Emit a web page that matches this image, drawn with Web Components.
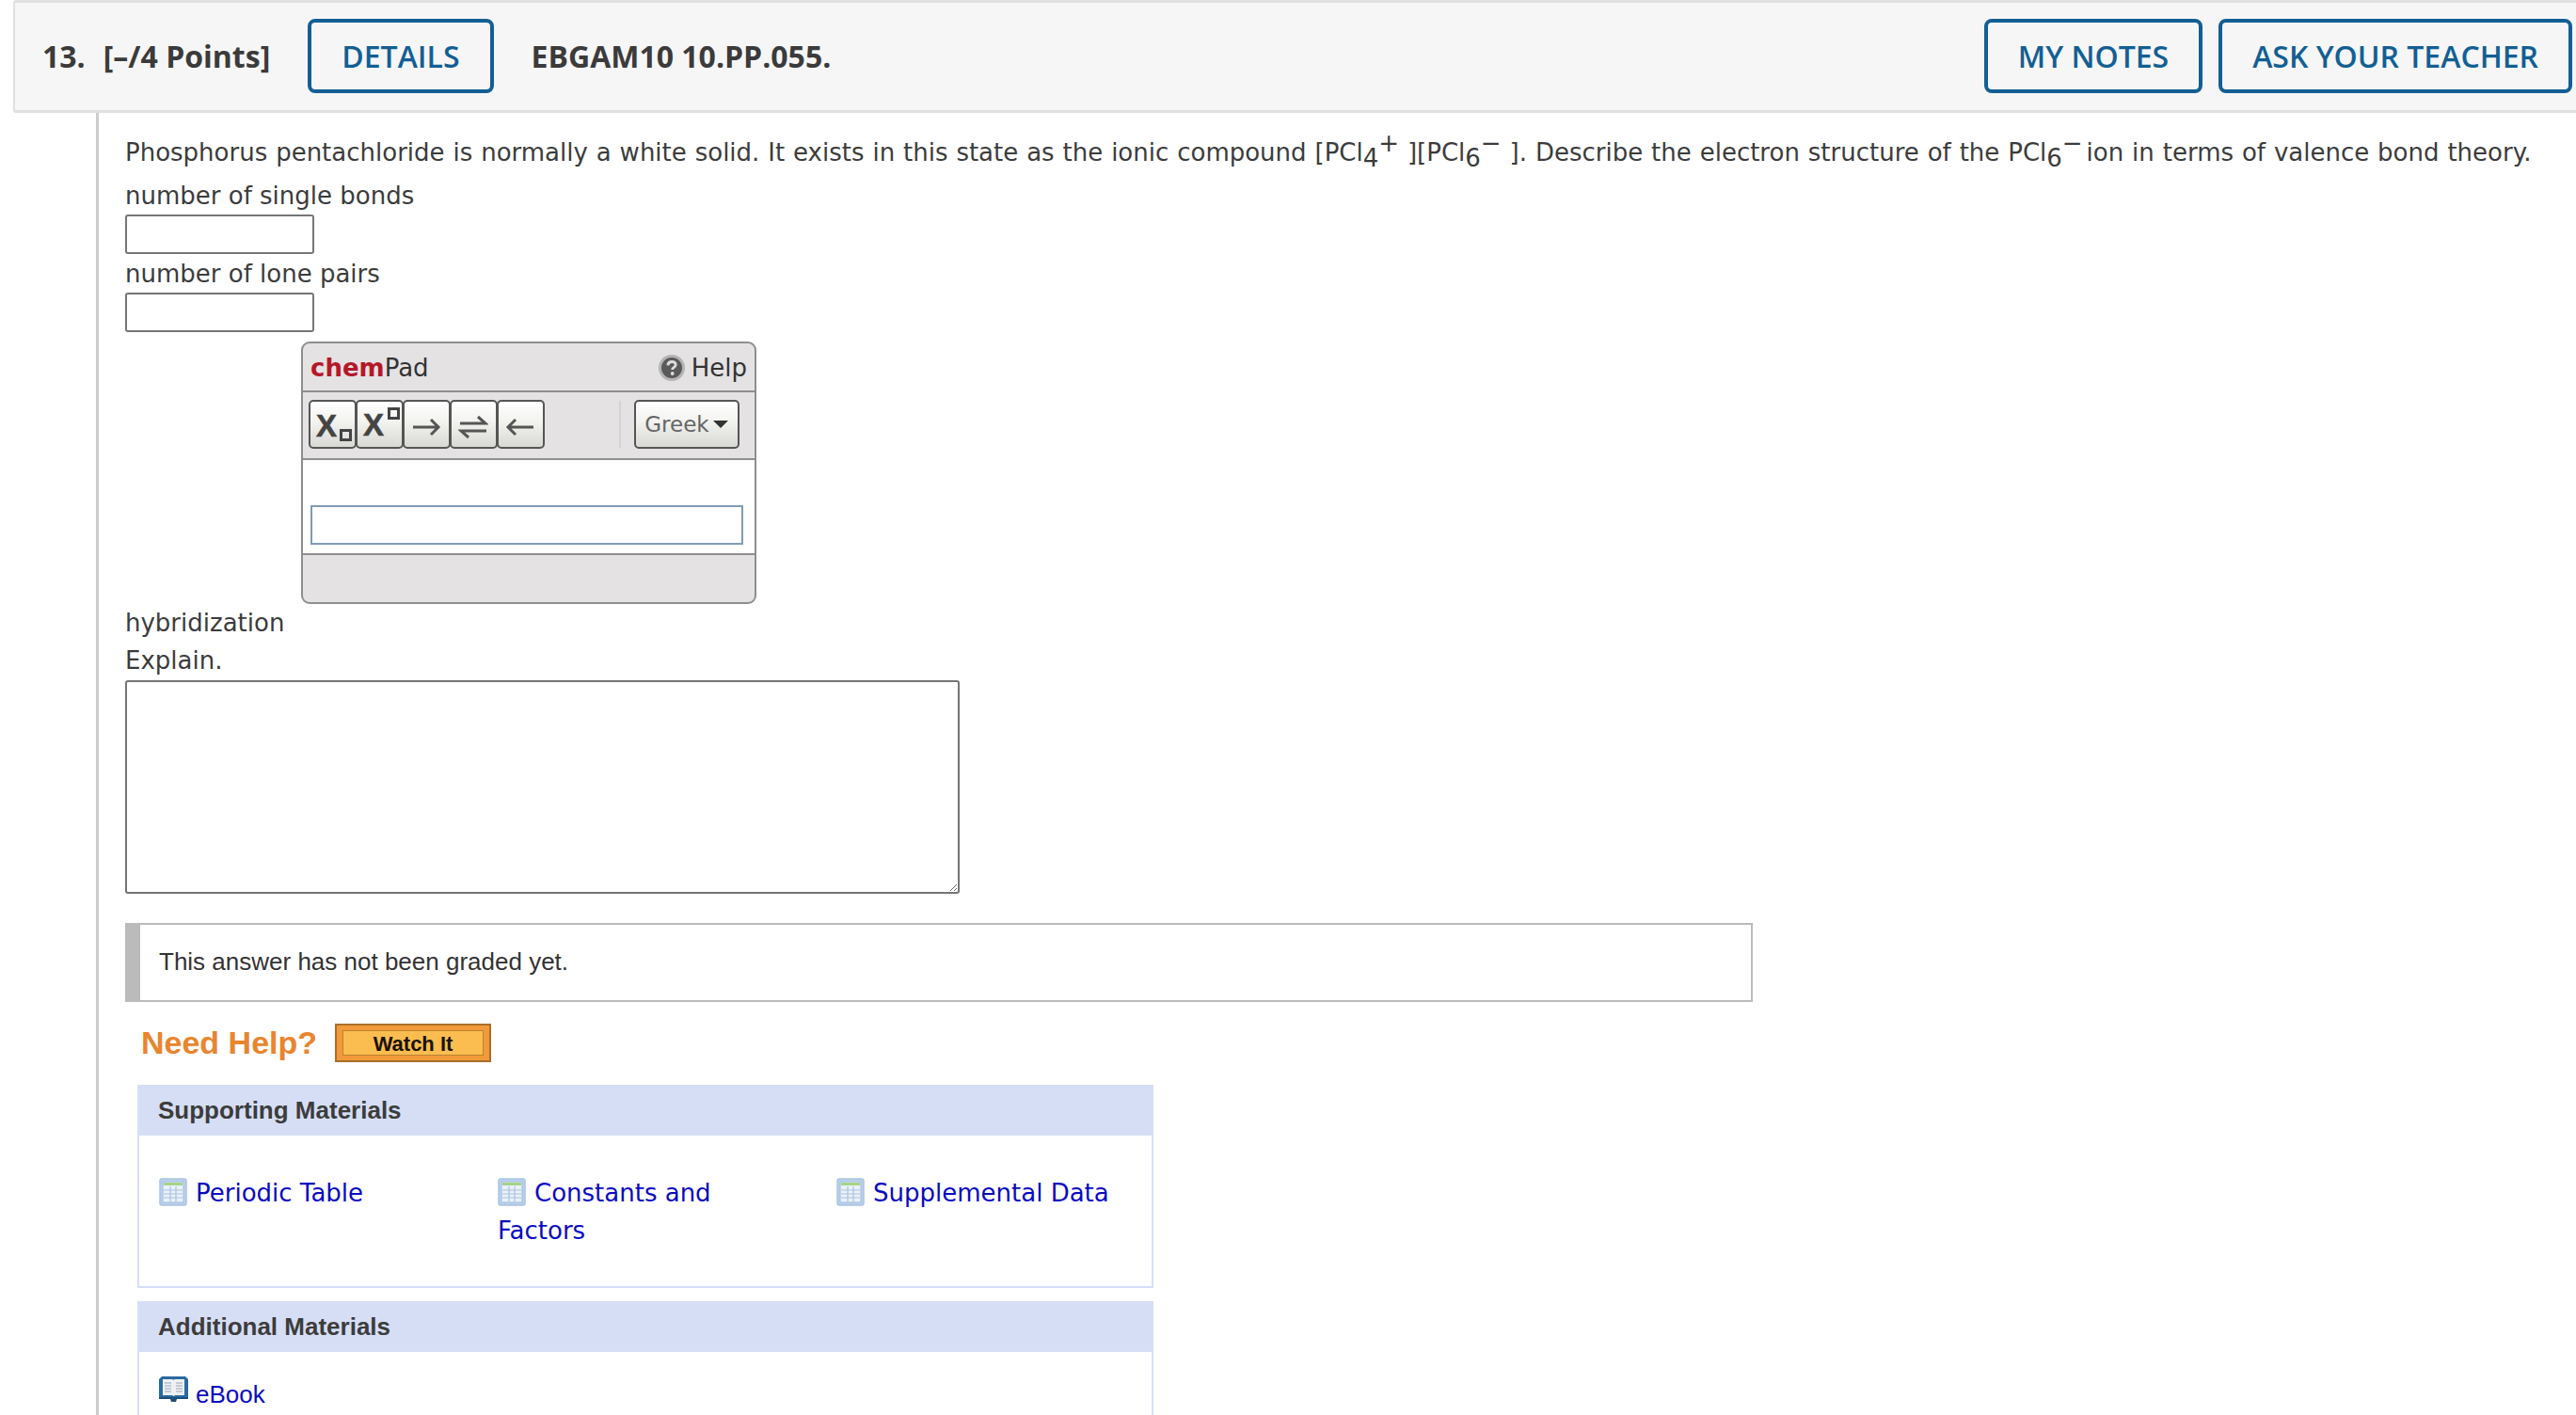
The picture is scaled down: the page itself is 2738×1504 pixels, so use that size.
<!DOCTYPE html>
<html lang="en"><head><meta charset="utf-8"><title>Question 13</title>
<style>
html,body{margin:0;padding:0;background:#fff;height:1504px;overflow:hidden}
body{font-family:"DejaVu Sans",Verdana,sans-serif;color:#3c3c3c}
</style></head><body>
<q-page>
  <q-header slot="header" number="13." points="[–/4 Points]" code="EBGAM10 10.PP.055."></q-header>
  <q-body>
    <q-text>Phosphorus pentachloride is normally a white solid. It exists in this state as the ionic compound [PCl<sub>4</sub><sup>+</sup> ][PCl<sub>6</sub><sup>−</sup> ]. Describe the electron structure of the PCl<sub>6</sub><sup style="letter-spacing:-5px">−</sup> ion in terms of valence bond theory.</q-text>
    <q-field label="number of single bonds"></q-field>
    <q-field label="number of lone pairs" style="margin-top:1px"></q-field>
    <chem-pad></chem-pad>
    <q-line>hybridization</q-line>
    <q-line>Explain.</q-line>
    <q-area></q-area>
    <grade-note>This answer has not been graded yet.</grade-note>
    <need-help></need-help>
    <mat-panel heading="Supporting Materials" variant="grid">
      <mat-link icon="table">Periodic Table</mat-link>
      <mat-link icon="table">Constants and Factors</mat-link>
      <mat-link icon="table">Supplemental Data</mat-link>
    </mat-panel>
    <mat-panel heading="Additional Materials" variant="list">
      <mat-link icon="book" sans>eBook</mat-link>
    </mat-panel>
  </q-body>
</q-page>
<script>
function def(name, html, init){
  customElements.define(name, class extends HTMLElement{
    constructor(){super();this.attachShadow({mode:'open'});}
    connectedCallback(){
      this.shadowRoot.innerHTML=typeof html==='function'?html(this):html;
      if(init)init(this);
    }
  });
}
def('q-page',`<style>:host{display:block}</style><slot name="header"></slot><slot></slot>`);
def('x-btn',`<style>
:host{display:inline-flex;align-items:center;justify-content:center;box-sizing:border-box;height:79px;border:4px solid #135f94;border-radius:8px;
font:600 32px "Open Sans",sans-serif;color:#135f94;padding:0 32px 1px;white-space:nowrap}
</style><slot></slot>`);
def('q-header',h=>`<style>
:host{display:flex;align-items:center;box-sizing:border-box;margin:0 0 0 14px;height:120px;background:#f6f6f6;border:solid #e0e0e0;border-width:3px 0 3px 2px;border-radius:3px 0 0 3px;
padding:0 4px 1px 29px;font:700 32px "Open Sans",sans-serif;color:#3b3b3b}
.n{margin-right:19px}.pts{margin-right:40px}.code{margin-left:40px;flex:1}
.n,.pts,.code{margin-bottom:1px}
x-btn+x-btn{margin-left:17px}
</style><span class="n">${h.getAttribute('number')||''}</span><span class="pts">${h.getAttribute('points')||''}</span>
<x-btn>DETAILS</x-btn><span class="code">${h.getAttribute('code')||''}</span><x-btn>MY NOTES</x-btn><x-btn>ASK YOUR TEACHER</x-btn>`);
def('q-body',`<style>:host{display:block;box-sizing:border-box;margin-left:102px;border-left:3px solid #ccc;padding:17px 0 0 28px;height:1384px;font:26px/40px "DejaVu Sans",Verdana,sans-serif;color:#3c3c3c}</style><slot></slot>`);
def('q-text',`<style>:host{display:block;white-space:nowrap;line-height:50px;margin-bottom:1px;word-spacing:.65px}
::slotted(sub),::slotted(sup){font-size:26px;line-height:0}
</style><slot></slot>`);
def('q-line',`<style>:host{display:block;line-height:40px;height:40px}</style><slot></slot>`);
def('q-field',h=>`<style>:host{display:block}
.l{height:40px;line-height:40px}
input{display:block;box-sizing:border-box;width:201px;height:42px;margin:0;border:2px solid #767676;border-radius:3px;background:#fff;padding:0}
</style><div class="l">${h.getAttribute('label')}</div><input type="text" aria-label="${h.getAttribute('label')}">`);
def('chem-pad',`<style>
:host{display:block;box-sizing:border-box;width:484px;height:279px;margin:10px 0 0 187px;border:2px solid #8e8e8e;border-radius:9px;background:#e5e2e3;overflow:hidden;font-family:"DejaVu Sans",sans-serif}
.top{display:flex;justify-content:space-between;align-items:center;height:52px;box-sizing:border-box;border-bottom:2px solid #8e8e8e;padding:2px 8px 0;font-size:26px;color:#333}
.top b{color:#b3182a}
.help{display:flex;align-items:center;gap:6px}
.tools{display:flex;align-items:center;height:72px;box-sizing:border-box;border-bottom:2px solid #8e8e8e;padding:0 0 2px 6px}
.b{position:relative;box-sizing:border-box;width:50.5px;height:52px;border:2px solid #555;border-radius:5px;background:linear-gradient(#fff,#f2f2ef 45%,#d8d8d4);display:flex;align-items:center;justify-content:center;color:#444}
.b+.b{margin-left:-.5px}
.sep{width:2px;height:50px;background:#d3d3d3;margin-left:79px}
.g{box-sizing:border-box;width:112px;height:52px;margin-left:14px;border:2px solid #555;border-radius:5px;background:linear-gradient(#fff,#f2f2ef 45%,#d8d8d4);display:flex;align-items:center;justify-content:center;gap:4px;font-size:23px;color:#666}
.tri{width:0;height:0;border:8px solid transparent;border-top:8px solid #333;border-bottom:0}
.x{font:700 33px/1 "Liberation Sans",sans-serif;position:absolute;color:#444;-webkit-text-stroke:.6px #444}
.s{position:absolute;width:7px;height:7px;border:3px solid #444;display:block}
.mid{height:101px;box-sizing:border-box;background:#fff;border-bottom:2px solid #8e8e8e;padding:48px 8px 0 8px}
.inp{box-sizing:border-box;height:42px;width:460px;border:2px solid #7f9cb8;background:#fff;display:block;padding:0;margin:0}
</style>
<div class="top"><span><b>chem</b>Pad</span><span class="help"><svg width="30" height="30" viewBox="0 0 30 30"><circle cx="15" cy="15" r="14" fill="#b4b4b4"/><circle cx="15" cy="15" r="11" fill="#5a5a5a"/><path d="M10.800 12.300c.3-2.500 2-3.800 4.300-3.800 2.400 0 4.100 1.300 4.100 3.300 0 2.600-3.600 2.700-3.600 5.200" fill="none" stroke="#dcdcdc" stroke-width="2.800"/><circle cx="15.700" cy="21" r="1.900" fill="#dcdcdc"/></svg>Help</span></div>
<div class="tools">
  <div class="b"><span class="x" style="left:6px;top:9px">X</span><i class="s" style="right:3px;bottom:6px"></i></div>
  <div class="b"><span class="x" style="left:6px;top:8px">X</span><i class="s" style="right:2px;top:6px"></i></div>
  <div class="b"><svg width="32" height="26" viewBox="0 0 32 26" style="margin-top:5px"><path d="M2 13h27M21 5l8 8-8 8" fill="none" stroke="#555" stroke-width="3"/></svg></div>
  <div class="b"><svg width="32" height="28" viewBox="0 0 32 28" style="margin-top:5px"><path d="M2 10h27l-8-7M30 18H3l8 7" fill="none" stroke="#555" stroke-width="3"/></svg></div>
  <div class="b"><svg width="32" height="26" viewBox="0 0 32 26" style="margin-top:5px"><path d="M30 13H3M11 5l-8 8 8 8" fill="none" stroke="#555" stroke-width="3"/></svg></div>
  <div class="sep"></div>
  <div class="g">Greek<span class="tri"></span></div>
</div>
<div class="mid"><input class="inp" type="text" aria-label="chemPad answer"></div>`);
def('q-area',`<style>:host{display:block;margin-top:1px}
textarea{display:block;box-sizing:border-box;width:887px;height:227px;margin:0;border:2px solid #767676;border-radius:3px;background:#fff;resize:both}
</style><textarea aria-label="Explain"></textarea>`);
def('grade-note',`<style>:host{display:block;box-sizing:border-box;width:1730px;height:84px;margin-top:31px;border:2px solid #bbb;border-left:16px solid #bbb;padding-left:20px;font:26px/79px "Liberation Sans",Arial,sans-serif;color:#333}</style><slot></slot>`);
def('need-help',`<style>
:host{display:flex;align-items:center;height:41px;margin-top:23px;padding-left:17px}
.t{font:700 34px "Liberation Sans",Arial,sans-serif;color:#e8852f;width:206px;white-space:nowrap}
.w{box-sizing:border-box;width:166px;height:41px;border:2px solid #a96f2c;background:#f29a3a;padding:5px 6px;display:flex}
.w span{flex:1;background:#fbbd50;border:1px solid #b9822f;padding-top:2px;box-sizing:border-box;display:flex;align-items:center;justify-content:center;font:700 22px "Liberation Sans",Arial,sans-serif;color:#1a1206}
</style><span class="t">Need Help?</span><span class="w"><span>Watch It</span></span>`);
def('mat-panel',h=>{const g=h.getAttribute('variant')==='grid';return `<style>
:host{display:block;box-sizing:border-box;width:1080px;margin:24px 0 0 13px;border:solid #d6def6;border-width:${g?'0 2px 2px 2px':'0 2px'}}
h3{margin:0 -2px;height:54px;background:#d6def6;padding:0 0 0 22px;font:700 26px/54px "Liberation Sans",Arial,sans-serif;color:#3c3c3c}
.c{box-sizing:border-box;${g?'display:grid;grid-template-columns:360px 360px 1fr;padding:41px 0 0 21px;height:160px':'padding:25px 20px 0 20px;height:68px'}}
</style><h3>${h.getAttribute('heading')}</h3><div class="c"><slot></slot></div>`}, h=>{ if(h.getAttribute('variant')==='list') h.style.marginTop='14px'; });
const tableIcon=`<svg width="30" height="30" viewBox="0 0 30 30" style="vertical-align:-5px;margin-right:9px"><rect x="1" y="1" width="28" height="28" rx="2" fill="#bcd2ec" stroke="#a9c4e3" stroke-width="1.500"/><rect x="4" y="4" width="22" height="22" fill="#eaf1f9" stroke="#9dbbdc"/><rect x="5" y="5" width="20" height="3" fill="#a5d488"/><path d="M5 13h20M5 17h20M5 21h20M12 9v16M18 9v16" stroke="#a9c2df" stroke-width="1.200"/></svg>`;
const bookIcon=`<svg width="33" height="28" viewBox="0 0 33 28" style="vertical-align:1px;margin-right:7px"><path d="M1 4l3-3h25l3 3v19H1z" fill="#2b6a9f"/><path d="M5 4h10c1 0 1.500 1 1.500 1S17 4 18 4h10v17H18l-1.500 1L15 21H5z" fill="#eef1f3"/><path d="M7 8h7M7 11h7M7 14h7M7 17h7M19 8h7M19 11h7M19 14h7M19 17h7" stroke="#b5bfc8" stroke-width="1.500"/><path d="M1 23h31v2H20l-1 3h-5l-1-3H1z" fill="#1d4f7a"/></svg>`;
def('mat-link',h=>`<style>:host{display:block;box-sizing:border-box;padding-right:${h.getAttribute('icon')==='book'?0:40}px;font:${h.hasAttribute('sans')?'26px/40px "Liberation Sans",Arial':'26px/40px "DejaVu Sans",Verdana'},sans-serif;color:#0a0ac0}</style>${h.getAttribute('icon')==='book'?bookIcon:tableIcon}<slot></slot>`);
</script>
</body></html>
